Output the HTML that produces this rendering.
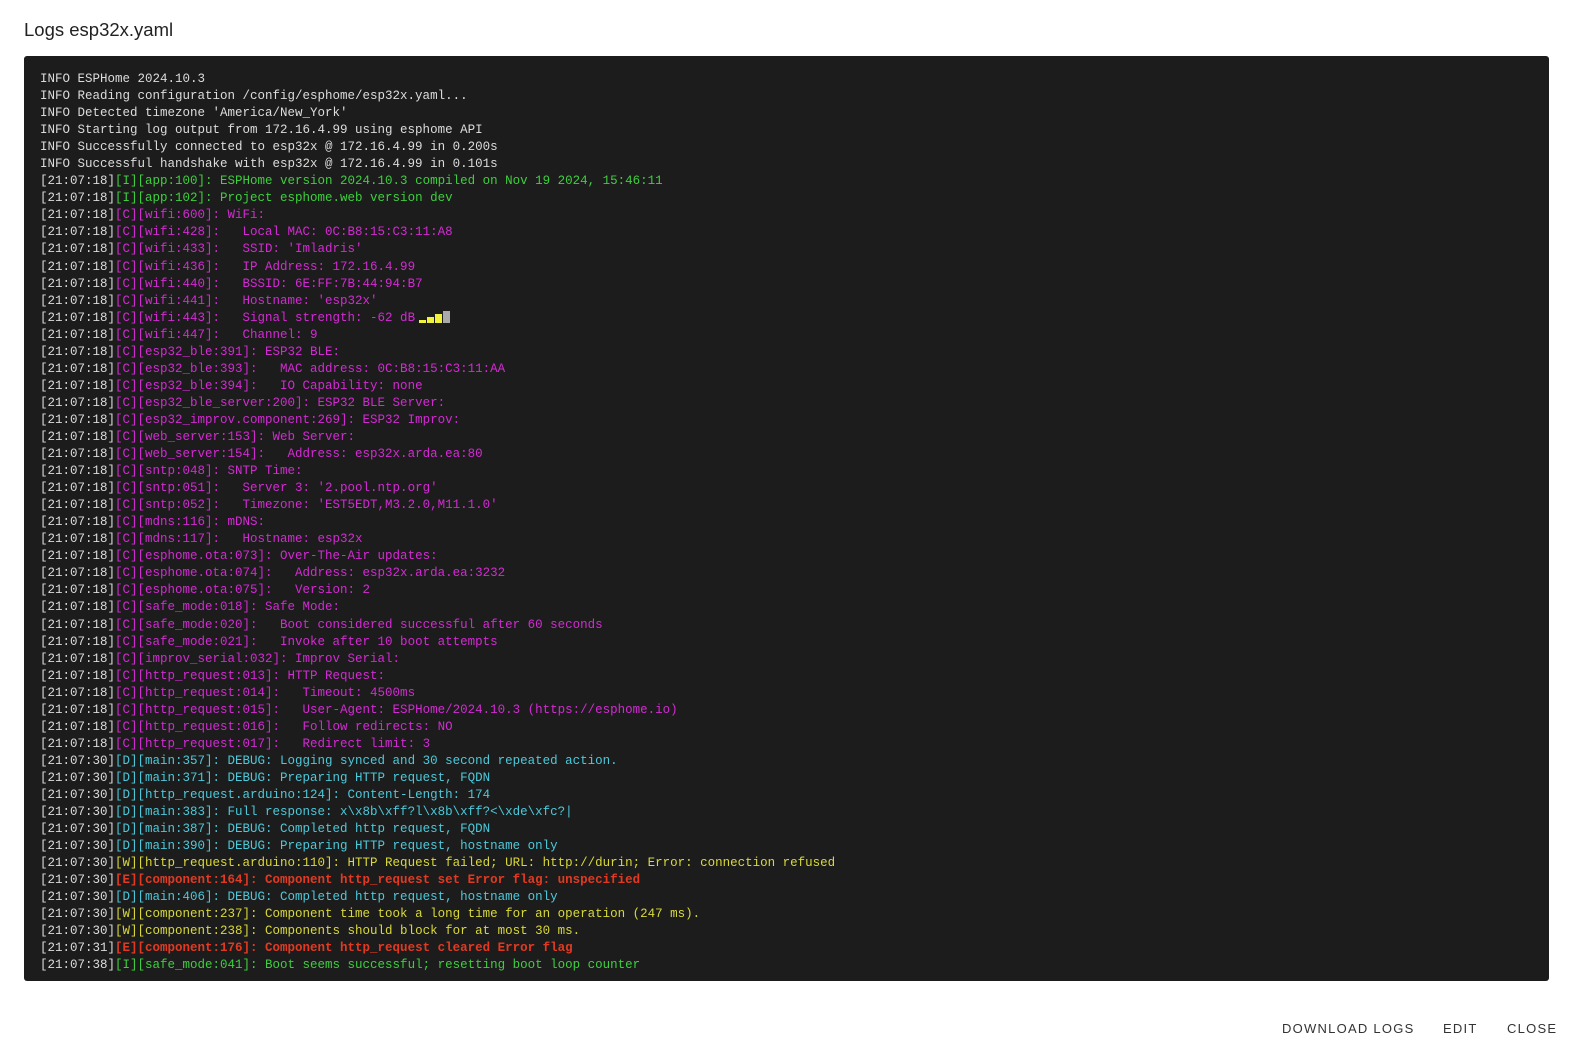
<!DOCTYPE html>
<html><head><meta charset="utf-8"><style>
html,body{margin:0;padding:0;background:#fff;width:1590px;height:1064px;overflow:hidden}
h1{position:absolute;left:24px;top:19px;margin:0;font:400 18.5px "Liberation Sans",sans-serif;color:#222}
.term{position:absolute;left:24px;top:56px;width:1525px;height:925px;background:#1c1c1c;border-radius:3px;box-sizing:border-box;padding:15px 0 0 16px;}
pre{margin:0;font:12.5px/17.05px "Liberation Mono",monospace;color:#dcdcdc;white-space:pre}
.g{color:#3ecf3e}.m{color:#d42ad4}.c{color:#4cc9da}.y{color:#d9d93a}.r{color:#e23a22;font-weight:bold}
.sig{display:inline-block;position:relative;width:32px;height:13px;vertical-align:-2px;margin-left:4px}
.sig i{position:absolute;bottom:0;width:7px;background:#f2f23a}
.btn{position:absolute;top:1021px;font:13px "Liberation Sans",sans-serif;letter-spacing:1.25px;color:#333}
</style></head><body>
<h1>Logs esp32x.yaml</h1>
<div class="term"><pre>INFO ESPHome 2024.10.3
INFO Reading configuration /config/esphome/esp32x.yaml...
INFO Detected timezone 'America/New_York'
INFO Starting log output from 172.16.4.99 using esphome API
INFO Successfully connected to esp32x @ 172.16.4.99 in 0.200s
INFO Successful handshake with esp32x @ 172.16.4.99 in 0.101s
[21:07:18]<span class="g">[I][app:100]: ESPHome version 2024.10.3 compiled on Nov 19 2024, 15:46:11</span>
[21:07:18]<span class="g">[I][app:102]: Project esphome.web version dev</span>
[21:07:18]<span class="m">[C][wifi:600]: WiFi:</span>
[21:07:18]<span class="m">[C][wifi:428]:   Local MAC: 0C:B8:15:C3:11:A8</span>
[21:07:18]<span class="m">[C][wifi:433]:   SSID: 'Imladris'</span>
[21:07:18]<span class="m">[C][wifi:436]:   IP Address: 172.16.4.99</span>
[21:07:18]<span class="m">[C][wifi:440]:   BSSID: 6E:FF:7B:44:94:B7</span>
[21:07:18]<span class="m">[C][wifi:441]:   Hostname: 'esp32x'</span>
[21:07:18]<span class="m">[C][wifi:443]:   Signal strength: -62 dB</span><span class="sig"><i style="left:0;height:3px"></i><i style="left:8px;height:6px"></i><i style="left:16px;height:9px"></i><i style="left:24px;height:12px;background:#aaa"></i></span>
[21:07:18]<span class="m">[C][wifi:447]:   Channel: 9</span>
[21:07:18]<span class="m">[C][esp32_ble:391]: ESP32 BLE:</span>
[21:07:18]<span class="m">[C][esp32_ble:393]:   MAC address: 0C:B8:15:C3:11:AA</span>
[21:07:18]<span class="m">[C][esp32_ble:394]:   IO Capability: none</span>
[21:07:18]<span class="m">[C][esp32_ble_server:200]: ESP32 BLE Server:</span>
[21:07:18]<span class="m">[C][esp32_improv.component:269]: ESP32 Improv:</span>
[21:07:18]<span class="m">[C][web_server:153]: Web Server:</span>
[21:07:18]<span class="m">[C][web_server:154]:   Address: esp32x.arda.ea:80</span>
[21:07:18]<span class="m">[C][sntp:048]: SNTP Time:</span>
[21:07:18]<span class="m">[C][sntp:051]:   Server 3: '2.pool.ntp.org'</span>
[21:07:18]<span class="m">[C][sntp:052]:   Timezone: 'EST5EDT,M3.2.0,M11.1.0'</span>
[21:07:18]<span class="m">[C][mdns:116]: mDNS:</span>
[21:07:18]<span class="m">[C][mdns:117]:   Hostname: esp32x</span>
[21:07:18]<span class="m">[C][esphome.ota:073]: Over-The-Air updates:</span>
[21:07:18]<span class="m">[C][esphome.ota:074]:   Address: esp32x.arda.ea:3232</span>
[21:07:18]<span class="m">[C][esphome.ota:075]:   Version: 2</span>
[21:07:18]<span class="m">[C][safe_mode:018]: Safe Mode:</span>
[21:07:18]<span class="m">[C][safe_mode:020]:   Boot considered successful after 60 seconds</span>
[21:07:18]<span class="m">[C][safe_mode:021]:   Invoke after 10 boot attempts</span>
[21:07:18]<span class="m">[C][improv_serial:032]: Improv Serial:</span>
[21:07:18]<span class="m">[C][http_request:013]: HTTP Request:</span>
[21:07:18]<span class="m">[C][http_request:014]:   Timeout: 4500ms</span>
[21:07:18]<span class="m">[C][http_request:015]:   User-Agent: ESPHome/2024.10.3 (https://esphome.io)</span>
[21:07:18]<span class="m">[C][http_request:016]:   Follow redirects: NO</span>
[21:07:18]<span class="m">[C][http_request:017]:   Redirect limit: 3</span>
[21:07:30]<span class="c">[D][main:357]: DEBUG: Logging synced and 30 second repeated action.</span>
[21:07:30]<span class="c">[D][main:371]: DEBUG: Preparing HTTP request, FQDN</span>
[21:07:30]<span class="c">[D][http_request.arduino:124]: Content-Length: 174</span>
[21:07:30]<span class="c">[D][main:383]: Full response: x\x8b\xff?l\x8b\xff?&lt;\xde\xfc?|</span>
[21:07:30]<span class="c">[D][main:387]: DEBUG: Completed http request, FQDN</span>
[21:07:30]<span class="c">[D][main:390]: DEBUG: Preparing HTTP request, hostname only</span>
[21:07:30]<span class="y">[W][http_request.arduino:110]: HTTP Request failed; URL: http://durin; Error: connection refused</span>
[21:07:30]<span class="r">[E][component:164]: Component http_request set Error flag: unspecified</span>
[21:07:30]<span class="c">[D][main:406]: DEBUG: Completed http request, hostname only</span>
[21:07:30]<span class="y">[W][component:237]: Component time took a long time for an operation (247 ms).</span>
[21:07:30]<span class="y">[W][component:238]: Components should block for at most 30 ms.</span>
[21:07:31]<span class="r">[E][component:176]: Component http_request cleared Error flag</span>
[21:07:38]<span class="g">[I][safe_mode:041]: Boot seems successful; resetting boot loop counter</span></pre></div>
<div class="btn" style="left:1282px">DOWNLOAD LOGS</div>
<div class="btn" style="left:1443px">EDIT</div>
<div class="btn" style="left:1507px">CLOSE</div>
</body></html>
